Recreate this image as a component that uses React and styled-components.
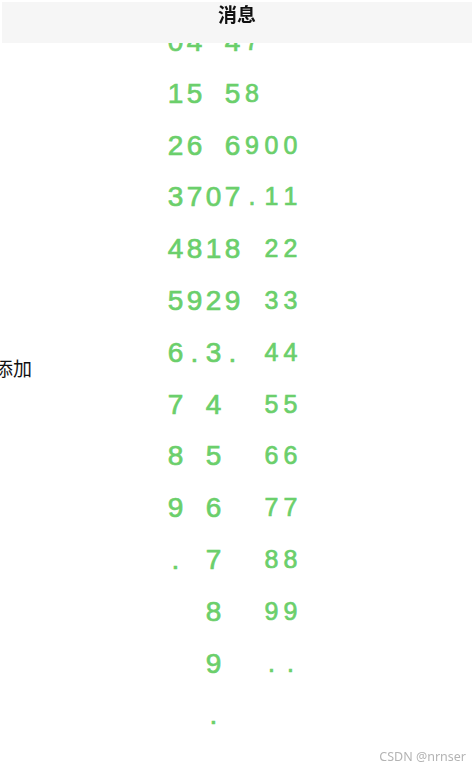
import React from 'react';
import styled, { createGlobalStyle } from 'styled-components';

const GlobalStyle = createGlobalStyle`
  html, body {
    margin: 0;
    padding: 0;
    background: #fff;
    font-family: "Liberation Sans", "Noto Sans CJK SC", sans-serif;
    overflow: hidden;
  }
`;

const NavBar = styled.header`
  position: fixed;
  top: 2px;
  left: 2px;
  right: 2px;
  height: 41px;
  z-index: 2;
  background: #f6f6f6;
  display: flex;
  justify-content: center;
  align-items: flex-start;
`;

const NavTitle = styled.h1`
  margin: 0;
  font-family: "Noto Sans CJK SC", sans-serif;
  font-size: 19px;
  font-weight: 700;
  line-height: 24px;
  color: #111;
`;

const Page = styled.main`
  display: flex;
  padding-top: 16px;
`;

const Side = styled.aside`
  width: 166px;
  padding-top: 338px;
`;

const AddButton = styled.span`
  display: block;
  margin-left: -6px;
  font-family: "Noto Sans CJK SC", sans-serif;
  font-size: 19px;
  line-height: 28px;
  color: #111;
`;

const Board = styled.div`
  display: grid;
  grid-template-columns: 19px 19px 19px 19px 20px 19px 19px;
  grid-auto-rows: 51.8px;
`;

const Cell = styled.span`
  grid-column: ${p => p.$col};
  grid-row: ${p => p.$row};
  font-size: ${p => (p.$small ? '25px' : '28px')};
  line-height: 51.8px;
  color: #6bcf6b;
  -webkit-text-stroke: 0.7px #6bcf6b;
  justify-self: center;
`;

const Watermark = styled.div`
  position: fixed;
  right: 8px;
  bottom: 6px;
  font-family: "Noto Sans", sans-serif;
  font-size: 12.5px;
  color: #b4b4b4;
`;

const columns = [
  { chars: '0123456789.', start: 0 },
  { chars: '456789.', start: 0 },
  { chars: '0123456789.', start: 3 },
  { chars: '456789.', start: 0 },
  { chars: '789.', start: 0, small: true },
  { chars: '0123456789.', start: 2, small: true },
  { chars: '0123456789.', start: 2, small: true },
];

export default function App() {
  return (
    <>
      <GlobalStyle />
      <NavBar>
        <NavTitle>消息</NavTitle>
      </NavBar>
      <Page>
        <Side>
          <AddButton>添加</AddButton>
        </Side>
        <Board>
          {columns.map((col, ci) =>
            col.chars.split('').map((ch, i) => (
              <Cell key={`${ci}-${i}`} $col={ci + 1} $row={col.start + i + 1} $small={col.small}>
                {ch}
              </Cell>
            ))
          )}
        </Board>
      </Page>
      <Watermark>CSDN @nrnser</Watermark>
    </>
  );
}
